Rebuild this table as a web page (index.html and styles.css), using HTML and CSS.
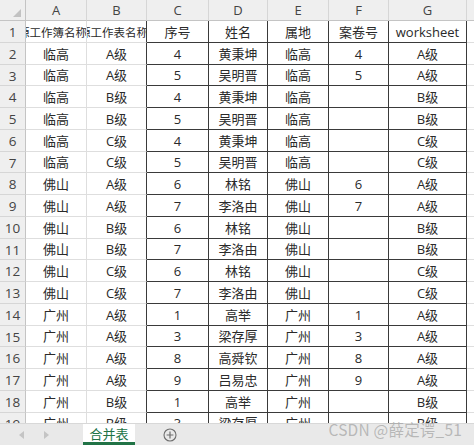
FILE: index.html
```html
<!DOCTYPE html>
<html lang="zh">
<head>
<meta charset="utf-8">
<title>合并表</title>
<link rel="stylesheet" href="styles.css">
</head>
<body>
<div class="sheet">
  <div class="grid">
    <div class="ch corner"><svg class="tri" width="8" height="8" viewBox="0 0 8 8"><polygon points="8,0 8,8 0,8" fill="#c2c2c2"/></svg></div><div class="ch">A</div><div class="ch">B</div><div class="ch">C</div><div class="ch">D</div><div class="ch">E</div><div class="ch">F</div><div class="ch">G</div><div class="ch last"></div>

    <div class="rh">1</div><div class="c clip"><span class="shift">源工作簿名称</span></div><div class="c e clip"><span class="shift">源工作表名称</span></div><div class="b">序号</div><div class="b">姓名</div><div class="b">属地</div><div class="b">案卷号</div><div class="b">worksheet</div><div class="c last"></div>

    <div class="rh">2</div><div class="c">临高</div><div class="c e">A级</div><div class="b">4</div><div class="b">黄秉坤</div><div class="b">临高</div><div class="b">4</div><div class="b">A级</div><div class="c last"></div>
    <div class="rh">3</div><div class="c">临高</div><div class="c e">A级</div><div class="b">5</div><div class="b">吴明晋</div><div class="b">临高</div><div class="b">5</div><div class="b">A级</div><div class="c last"></div>
    <div class="rh">4</div><div class="c">临高</div><div class="c e">B级</div><div class="b">4</div><div class="b">黄秉坤</div><div class="b">临高</div><div class="b"></div><div class="b">B级</div><div class="c last"></div>
    <div class="rh">5</div><div class="c">临高</div><div class="c e">B级</div><div class="b">5</div><div class="b">吴明晋</div><div class="b">临高</div><div class="b"></div><div class="b">B级</div><div class="c last"></div>
    <div class="rh">6</div><div class="c">临高</div><div class="c e">C级</div><div class="b">4</div><div class="b">黄秉坤</div><div class="b">临高</div><div class="b"></div><div class="b">C级</div><div class="c last"></div>
    <div class="rh">7</div><div class="c">临高</div><div class="c e">C级</div><div class="b">5</div><div class="b">吴明晋</div><div class="b">临高</div><div class="b"></div><div class="b">C级</div><div class="c last"></div>
    <div class="rh">8</div><div class="c">佛山</div><div class="c e">A级</div><div class="b">6</div><div class="b">林铭</div><div class="b">佛山</div><div class="b">6</div><div class="b">A级</div><div class="c last"></div>
    <div class="rh">9</div><div class="c">佛山</div><div class="c e">A级</div><div class="b">7</div><div class="b">李洛由</div><div class="b">佛山</div><div class="b">7</div><div class="b">A级</div><div class="c last"></div>
    <div class="rh">10</div><div class="c">佛山</div><div class="c e">B级</div><div class="b">6</div><div class="b">林铭</div><div class="b">佛山</div><div class="b"></div><div class="b">B级</div><div class="c last"></div>
    <div class="rh">11</div><div class="c">佛山</div><div class="c e">B级</div><div class="b">7</div><div class="b">李洛由</div><div class="b">佛山</div><div class="b"></div><div class="b">B级</div><div class="c last"></div>
    <div class="rh">12</div><div class="c">佛山</div><div class="c e">C级</div><div class="b">6</div><div class="b">林铭</div><div class="b">佛山</div><div class="b"></div><div class="b">C级</div><div class="c last"></div>
    <div class="rh">13</div><div class="c">佛山</div><div class="c e">C级</div><div class="b">7</div><div class="b">李洛由</div><div class="b">佛山</div><div class="b"></div><div class="b">C级</div><div class="c last"></div>
    <div class="rh">14</div><div class="c">广州</div><div class="c e">A级</div><div class="b">1</div><div class="b">高举</div><div class="b">广州</div><div class="b">1</div><div class="b">A级</div><div class="c last"></div>
    <div class="rh">15</div><div class="c">广州</div><div class="c e">A级</div><div class="b">3</div><div class="b">梁存厚</div><div class="b">广州</div><div class="b">3</div><div class="b">A级</div><div class="c last"></div>
    <div class="rh">16</div><div class="c">广州</div><div class="c e">A级</div><div class="b">8</div><div class="b">高舜钦</div><div class="b">广州</div><div class="b">8</div><div class="b">A级</div><div class="c last"></div>
    <div class="rh">17</div><div class="c">广州</div><div class="c e">A级</div><div class="b">9</div><div class="b">吕易忠</div><div class="b">广州</div><div class="b">9</div><div class="b">A级</div><div class="c last"></div>
    <div class="rh">18</div><div class="c">广州</div><div class="c e">B级</div><div class="b">1</div><div class="b">高举</div><div class="b">广州</div><div class="b"></div><div class="b">B级</div><div class="c last"></div>
    <div class="rh">19</div><div class="c">广州</div><div class="c e">B级</div><div class="b">3</div><div class="b">梁存厚</div><div class="b">广州</div><div class="b"></div><div class="b">B级</div><div class="c last"></div>
  </div>

  <div class="tabs">
    <div class="nav">
      <svg width="6" height="8" viewBox="0 0 6 8"><polygon points="5,0 5,8 0,4" fill="#c4c4c4"/></svg>
      <svg width="6" height="8" viewBox="0 0 6 8"><polygon points="1,0 1,8 6,4" fill="#c4c4c4"/></svg>
    </div>
    <div class="tab">合并表</div>
    <div class="add">
      <svg width="14" height="14" viewBox="0 0 14 14"><circle cx="7" cy="7" r="6" fill="none" stroke="#6e6e6e" stroke-width="1.1"/><path d="M7 3.6V10.4M3.6 7H10.4" stroke="#6e6e6e" stroke-width="1.2"/></svg>
    </div>
  </div>

  <div class="watermark">CSDN @薛定谔_51</div>
</div>
</body>
</html>
```
FILE: styles.css
```css
* { box-sizing: border-box; }
html, body { margin: 0; padding: 0; background: #fff; }
body { overflow: hidden; }

.sheet {
  position: relative;
  width: 474px;
  height: 445px;
  overflow: hidden;
  font-family: "Open Sans", "Noto Sans CJK SC", sans-serif;
  font-size: 13px;
  color: #2a2a2a;
}

.grid {
  display: grid;
  grid-template-columns: 26px 61px 60px 62px 59px 61px 60px 78px 1fr;
  grid-template-rows: 21px repeat(19, 21.75px);
  height: 423px;
  overflow: hidden;
}

.grid > div {
  display: flex;
  align-items: center;
  justify-content: center;
  white-space: nowrap;
  overflow: hidden;
  line-height: 1;
}

.ch {
  background: #efefef;
  border-right: 1px solid #d6d6d6;
  border-bottom: 1px solid #c4c4c4;
  color: #444;
  padding-top: 1px;
}
.ch.corner {
  border-right-color: #c4c4c4;
  justify-content: flex-end;
  align-items: flex-end;
  padding: 0 4px 3px 0;
}
.grid > .rh {
  background: #efefef;
  border-right: 1px solid #c4c4c4;
  border-bottom: 1px solid #d6d6d6;
  color: #444;
  font-size: 13.5px;
  padding-top: 3px;
}
.grid > .c {
  border-right: 1px solid #dedede;
  border-bottom: 1px solid #dedede;
  padding-top: 2px;
}
.grid > .c.e { border-right-color: #3a3a3a; }
.grid > .b {
  border-right: 1px solid #3a3a3a;
  border-bottom: 1px solid #3a3a3a;
  padding-top: 2px;
}
.grid > .last { border-right: none; }

.grid > .clip { justify-content: flex-start; }
.shift { margin-left: -8px; font-size: 11.5px; }

.tabs {
  display: flex;
  align-items: stretch;
  height: 22px;
  background: #e9e9e9;
  border-top: 1px solid #d8d8d8;
}
.nav {
  width: 83px;
  display: flex;
  align-items: center;
  gap: 18px;
  padding-left: 19px;
}
.tab {
  width: 52px;
  background: #fff;
  color: #217346;
  font-size: 13px;
  display: flex;
  align-items: center;
  justify-content: center;
  border-bottom: 3px solid #217346;
  padding-top: 1px;
}
.add {
  width: 70px;
  display: flex;
  align-items: center;
  justify-content: center;
}

.watermark {
  position: absolute;
  right: 12px;
  bottom: 8px;
  font-family: "Noto Sans CJK SC", sans-serif;
  font-size: 15.5px;
  color: rgba(150, 150, 150, 0.6);
  letter-spacing: 0.2px;
  line-height: 1;
}
```
